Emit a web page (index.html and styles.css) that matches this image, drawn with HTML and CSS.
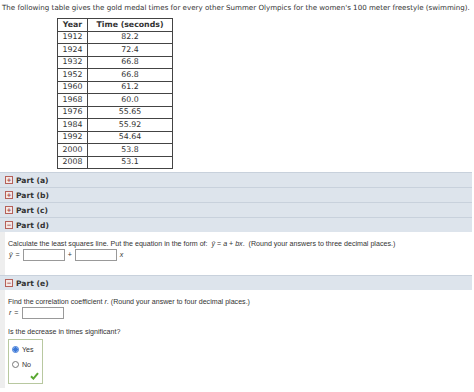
FILE: index.html
```html
<!DOCTYPE html>
<html>
<head>
<meta charset="utf-8">
<link rel="stylesheet" href="styles.css">
</head>
<body>
<p class="intro">The following table gives the gold medal times for every other Summer Olympics for the women's 100 meter freestyle (swimming).</p>
<table class="data">
  <tr><th class="yr">Year</th><th class="tm">Time (seconds)</th></tr>
  <tr><td>1912</td><td>82.2</td></tr>
  <tr><td>1924</td><td>72.4</td></tr>
  <tr><td>1932</td><td>66.8</td></tr>
  <tr><td>1952</td><td>66.8</td></tr>
  <tr><td>1960</td><td>61.2</td></tr>
  <tr><td>1968</td><td>60.0</td></tr>
  <tr><td>1976</td><td>55.65</td></tr>
  <tr><td>1984</td><td>55.92</td></tr>
  <tr><td>1992</td><td>54.64</td></tr>
  <tr><td>2000</td><td>53.8</td></tr>
  <tr><td>2008</td><td>53.1</td></tr>
</table>
<div class="parts">
  <div class="part-head"><span class="tog">+</span>Part (a)</div>
  <div class="part-head"><span class="tog">+</span>Part (b)</div>
  <div class="part-head"><span class="tog">+</span>Part (c)</div>
  <div class="part-head"><span class="tog">&minus;</span>Part (d)</div>
  <div class="part-body body-d">
    <p class="q">Calculate the least squares line. Put the equation in the form of: &nbsp;<i>ŷ</i> = <i>a</i> + <i>bx</i>. &nbsp;(Round your answers to three decimal places.)</p>
    <div class="ans"><i>ŷ</i>&nbsp;=<span class="box"></span>+<span class="box"></span><i>x</i></div>
  </div>
  <div class="part-head"><span class="tog">&minus;</span>Part (e)</div>
  <div class="part-body body-e">
    <p class="q">Find the correlation coefficient <i>r</i>. (Round your answer to four decimal places.)</p>
    <div class="ans"><i>r</i>&nbsp;=<span class="box"></span></div>
    <p class="q q2">Is the decrease in times significant?</p>
    <div class="radios">
      <div class="opt"><span class="rad on"></span>Yes</div>
      <div class="opt"><span class="rad"></span>No</div>
      <div class="chk"><svg width="9" height="8" viewBox="0 0 9 8"><path d="M1 4.2 L3.4 6.6 L8 1.2" fill="none" stroke="#5aa832" stroke-width="2"/></svg></div>
    </div>
  </div>
</div>
</body>
</html>
```
FILE: styles.css
```css
html, body { margin: 0; padding: 0; background: #fff; }
body { width: 474px; height: 392px; overflow: hidden; color: #333; }
.intro {
  margin: 0; padding: 3px 0 0 2px;
  font-family: "DejaVu Sans", Verdana, sans-serif;
  font-size: 7.1px; line-height: 10px; color: #333; white-space: nowrap;
}
.data {
  margin: 5px 0 0 57px;
  border-collapse: collapse;
  font-family: "DejaVu Sans", Verdana, sans-serif;
  font-size: 7.8px; color: #333;
}
.data th, .data td {
  border: 1px solid #444; height: 11.5px; padding: 0; text-align: center; line-height: 10px;
}
.data th { font-weight: bold; }
.data .yr { width: 29px; }
.data .tm { width: 84px; }
.parts {
  margin-top: 3px;
  font-family: "Liberation Sans", Arial, sans-serif;
  font-size: 7.1px; color: #333;
}
.part-head {
  display: flex; align-items: center; gap: 3px;
  height: 14px; margin-right: 2px;
  background: #dde4ec; border-top: 1px solid #c8d1dc;
  padding-left: 5px;
  font-family: "DejaVu Sans", Verdana, sans-serif; font-weight: bold; font-size: 7.6px; color: #333;
}
.tog {
  display: inline-flex; align-items: center; justify-content: center;
  width: 6px; height: 6px; border: 1px solid #b5605a; background: #f5e8e6; color: #a04040;
  font-size: 6px; line-height: 6px; font-weight: bold; font-family: "DejaVu Sans", sans-serif;
}
.part-body {
  border-left: 5px solid #eeeeee; padding: 8px 0 0 3px;
}
.body-d { height: 35px; }
.body-e { height: 90px; }
.q { margin: 0; line-height: 9px; }
.q2 { margin-top: 9px; }
.ans { display: flex; align-items: center; gap: 1px; margin-top: 0; padding-left: 1px; }
.box { display: inline-block; width: 40px; height: 10px; border: 1px solid #999; background: #fff; margin: 0 2px; }
.radios {
  display: flex; flex-direction: column; width: 35px; height: 45px; margin-top: 2px;
  border: 1px solid #b8c8a0; padding: 2px 0 0 3px; box-sizing: border-box;
}
.opt { display: flex; align-items: center; gap: 3px; height: 15px; }
.rad { width: 7px; height: 7px; border: 1px solid #777; border-radius: 50%; box-sizing: border-box; background: #fff; }
.rad.on { border-color: #3b78d8; background: radial-gradient(circle, #3b78d8 0 2px, #fff 2.5px); }
.chk { display: flex; justify-content: flex-end; padding-right: 3px; }
```
